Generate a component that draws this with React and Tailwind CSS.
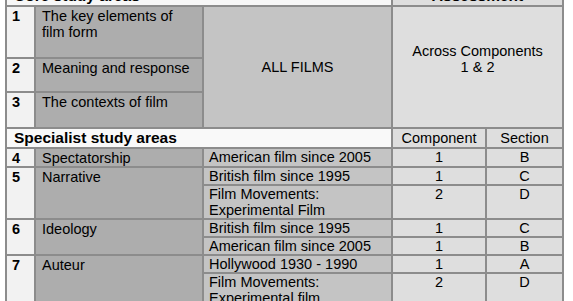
import React from "react";

const num = "bg-[#f2f2f2] align-top pl-[5px] pt-[1px] font-bold";
const area = "bg-[#adadad] align-top pl-[6px] pt-[1px]";
const film = "bg-[#c4c4c4] align-top pl-[5px]";
const cell = "bg-[#dedede] align-top text-center";

export default function App() {
  return (
    <div className="h-[301px] overflow-hidden bg-white text-black font-['Liberation_Sans',Arial,sans-serif] text-[14.5px] leading-[16px]">
      <table className="table-fixed border-separate border-spacing-[2px] bg-[#8c8c8c] w-[559px] ml-[5px] mt-[-15px]">
        <colgroup>
          <col className="w-[27px]" />
          <col className="w-[166px]" />
          <col className="w-[187px]" />
          <col className="w-[92px]" />
          <col className="w-[75px]" />
        </colgroup>
        <tbody>
          <tr className="h-[18px]">
            <td colSpan={3} className="bg-[#f7f7f7] pl-[7px] font-bold text-[15.5px] leading-[18px]">
              Core study areas
            </td>
            <td colSpan={2} className="bg-[#dedede] text-center font-bold text-[15.5px] leading-[18px]">
              Assessment
            </td>
          </tr>
          <tr className="h-[50px]">
            <td className={num}>1</td>
            <td className={area}>
              The key elements of
              <br />
              film form
            </td>
            <td rowSpan={3} className="bg-[#c4c4c4] text-center align-middle">
              ALL FILMS
            </td>
            <td colSpan={2} rowSpan={3} className="bg-[#dedede] text-center align-middle pb-[16px]">
              Across Components
              <br />1 &amp; 2
            </td>
          </tr>
          <tr className="h-[32px]">
            <td className={num}>2</td>
            <td className={area}>Meaning and response</td>
          </tr>
          <tr className="h-[34px]">
            <td className={num}>3</td>
            <td className={area}>The contexts of film</td>
          </tr>
          <tr className="h-[18px]">
            <td colSpan={3} className="bg-[#f9f9f9] pl-[7px] font-bold text-[15.5px] leading-[18px]">
              Specialist study areas
            </td>
            <td className="bg-[#dedede] text-center leading-[18px]">Component</td>
            <td className="bg-[#dedede] text-center leading-[18px]">Section</td>
          </tr>
          <tr className="h-[16px]">
            <td className={num}>4</td>
            <td className={area}>Spectatorship</td>
            <td className={film}>American film since 2005</td>
            <td className={cell}>1</td>
            <td className={cell}>B</td>
          </tr>
          <tr className="h-[16px]">
            <td rowSpan={2} className={num}>5</td>
            <td rowSpan={2} className={area}>Narrative</td>
            <td className={film}>British film since 1995</td>
            <td className={cell}>1</td>
            <td className={cell}>C</td>
          </tr>
          <tr className="h-[32px]">
            <td className={film}>
              Film Movements:
              <br />
              Experimental Film
            </td>
            <td className={cell}>2</td>
            <td className={cell}>D</td>
          </tr>
          <tr className="h-[16px]">
            <td rowSpan={2} className={num}>6</td>
            <td rowSpan={2} className={area}>Ideology</td>
            <td className={film}>British film since 1995</td>
            <td className={cell}>1</td>
            <td className={cell}>C</td>
          </tr>
          <tr className="h-[16px]">
            <td className={film}>American film since 2005</td>
            <td className={cell}>1</td>
            <td className={cell}>B</td>
          </tr>
          <tr className="h-[16px]">
            <td rowSpan={2} className={num}>7</td>
            <td rowSpan={2} className={area}>Auteur</td>
            <td className={film}>Hollywood 1930 - 1990</td>
            <td className={cell}>1</td>
            <td className={cell}>A</td>
          </tr>
          <tr className="h-[32px]">
            <td className={film}>
              Film Movements:
              <br />
              Experimental film
            </td>
            <td className={cell}>2</td>
            <td className={cell}>D</td>
          </tr>
        </tbody>
      </table>
    </div>
  );
}
